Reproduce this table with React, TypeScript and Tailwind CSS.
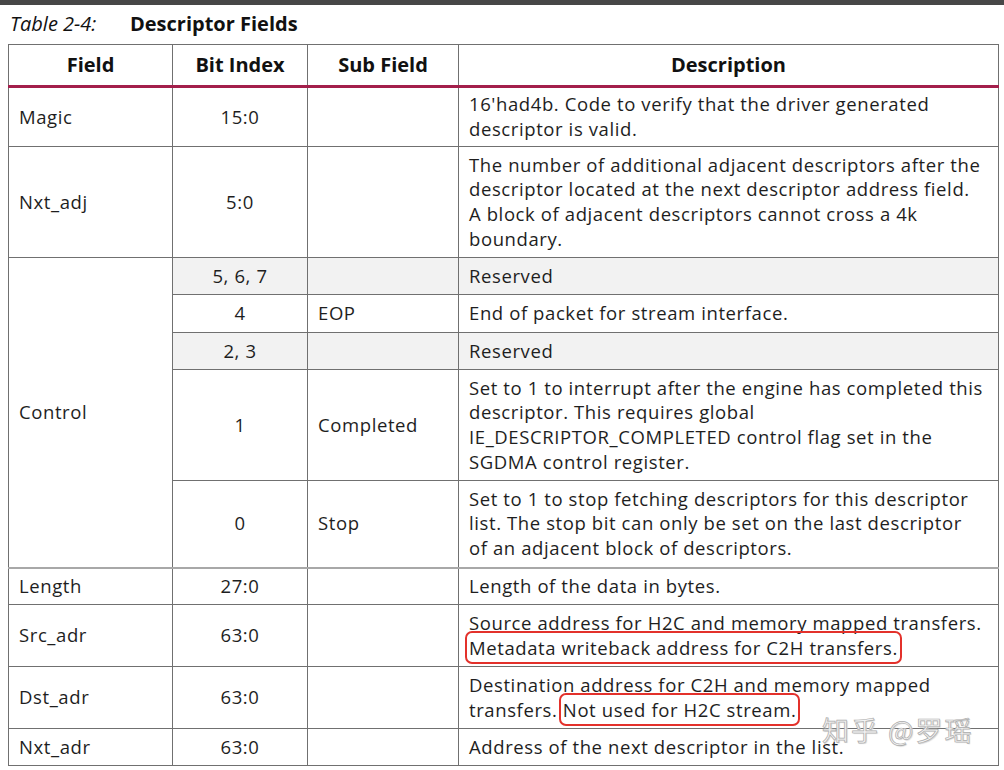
const font = { fontFamily: '"Open Sans", "Noto Sans", sans-serif' };

function Boxed({ children }: { children: React.ReactNode }) {
  return (
    <span className="rounded-[3px] outline-2 outline-offset-[2px] outline-[#e3312b]">{children}</span>
  );
}

function Lines({ lines }: { lines: React.ReactNode[] }) {
  return (
    <>
      {lines.map((l, i) => (
        <div key={i} className="whitespace-nowrap">
          {l}
        </div>
      ))}
    </>
  );
}

const cell =
  "border border-[#707070] align-middle px-[10px] text-[18.5px] tracking-[0.6px] leading-[24.6px] text-[#1e1e1e]";
const gray = "bg-[#f2f2f2]";

export default function App() {
  return (
    <div className="relative w-[1004px] h-[770px] bg-white overflow-hidden" style={font}>
      <div className="h-[5px] bg-[#474747]" />
      <div className="flex items-baseline pl-[10px] pt-[4px] h-[39px] text-[20px] text-[#111]">
        <span className="italic w-[120px]">Table 2-4:</span>
        <span className="font-bold">Descriptor Fields</span>
      </div>
      <table className="ml-[8px] w-[990px] table-fixed border-collapse">
        <colgroup>
          <col className="w-[164px]" />
          <col className="w-[135px]" />
          <col className="w-[151px]" />
          <col className="w-[540px]" />
        </colgroup>
        <thead>
          <tr className="h-[42px]">
            {["Field", "Bit Index", "Sub Field", "Description"].map((h) => (
              <th
                key={h}
                className="border border-[#707070] border-b-[3px] border-b-[#a31f4b] text-center align-middle text-[20px] font-bold text-[#111]"
              >
                {h}
              </th>
            ))}
          </tr>
        </thead>
        <tbody>
          <tr className="h-[60px]">
            <td className={cell}>Magic</td>
            <td className={`${cell} text-center`}>15:0</td>
            <td className={cell}></td>
            <td className={cell}>
              <Lines lines={["16'had4b. Code to verify that the driver generated", "descriptor is valid."]} />
            </td>
          </tr>
          <tr className="h-[111px]">
            <td className={cell}>Nxt_adj</td>
            <td className={`${cell} text-center`}>5:0</td>
            <td className={cell}></td>
            <td className={cell}>
              <Lines
                lines={[
                  "The number of additional adjacent descriptors after the",
                  "descriptor located at the next descriptor address field.",
                  "A block of adjacent descriptors cannot cross a 4k",
                  "boundary.",
                ]}
              />
            </td>
          </tr>
          <tr className="h-[37px]">
            <td className={`${cell} border-b-2 border-b-[#a8a8a8]`} rowSpan={5}>
              Control
            </td>
            <td className={`${cell} ${gray} text-center`}>5, 6, 7</td>
            <td className={`${cell} ${gray}`}></td>
            <td className={`${cell} ${gray}`}>Reserved</td>
          </tr>
          <tr className="h-[38px]">
            <td className={`${cell} text-center`}>4</td>
            <td className={cell}>EOP</td>
            <td className={cell}>End of packet for stream interface.</td>
          </tr>
          <tr className="h-[37px]">
            <td className={`${cell} ${gray} text-center`}>2, 3</td>
            <td className={`${cell} ${gray}`}></td>
            <td className={`${cell} ${gray}`}>Reserved</td>
          </tr>
          <tr className="h-[111px]">
            <td className={`${cell} text-center`}>1</td>
            <td className={cell}>Completed</td>
            <td className={cell}>
              <Lines
                lines={[
                  "Set to 1 to interrupt after the engine has completed this",
                  "descriptor. This requires global",
                  "IE_DESCRIPTOR_COMPLETED control flag set in the",
                  "SGDMA control register.",
                ]}
              />
            </td>
          </tr>
          <tr className="h-[87px]">
            <td className={`${cell} border-b-2 border-b-[#a8a8a8] text-center`}>0</td>
            <td className={`${cell} border-b-2 border-b-[#a8a8a8]`}>Stop</td>
            <td className={`${cell} border-b-2 border-b-[#a8a8a8]`}>
              <Lines
                lines={[
                  "Set to 1 to stop fetching descriptors for this descriptor",
                  "list. The stop bit can only be set on the last descriptor",
                  "of an adjacent block of descriptors.",
                ]}
              />
            </td>
          </tr>
          <tr className="h-[37px]">
            <td className={cell}>Length</td>
            <td className={`${cell} text-center`}>27:0</td>
            <td className={cell}></td>
            <td className={cell}>Length of the data in bytes.</td>
          </tr>
          <tr className="h-[62px]">
            <td className={cell}>Src_adr</td>
            <td className={`${cell} text-center`}>63:0</td>
            <td className={cell}></td>
            <td className={cell}>
              <Lines
                lines={[
                  "Source address for H2C and memory mapped transfers.",
                  <Boxed key="b">Metadata writeback address for C2H transfers.</Boxed>,
                ]}
              />
            </td>
          </tr>
          <tr className="h-[62px]">
            <td className={cell}>Dst_adr</td>
            <td className={`${cell} text-center`}>63:0</td>
            <td className={cell}></td>
            <td className={cell}>
              <Lines
                lines={[
                  "Destination address for C2H and memory mapped",
                  <span key="b">
                    transfers. <Boxed>Not used for H2C stream.</Boxed>
                  </span>,
                ]}
              />
            </td>
          </tr>
          <tr className="h-[37px]">
            <td className={cell}>Nxt_adr</td>
            <td className={`${cell} text-center`}>63:0</td>
            <td className={cell}></td>
            <td className={cell}>Address of the next descriptor in the list.</td>
          </tr>
        </tbody>
      </table>
      <div
        className="absolute left-[822px] top-[710px] text-[27px] tracking-[2px] text-[#f3f3f3] [-webkit-text-stroke:0.7px_#ababab] [text-shadow:1px_1px_1px_#d6d6d6]"
        style={{ fontFamily: '"Noto Sans CJK SC", sans-serif' }}
      >
        知乎 @罗瑶
      </div>
    </div>
  );
}
